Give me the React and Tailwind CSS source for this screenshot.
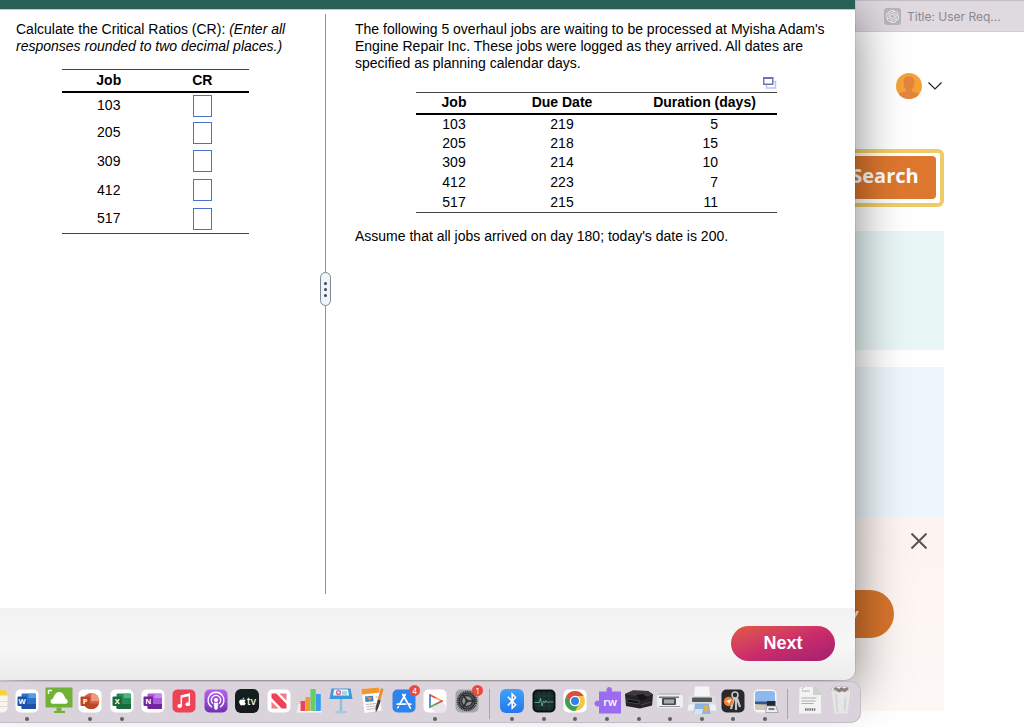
import React from "react";
import { SiOpenai } from "react-icons/si";
import { FaApple, FaBluetoothB } from "react-icons/fa";

const criticalJobs = ["103", "205", "309", "412", "517"];

const jobs = [
  ["103", "219", "5"],
  ["205", "218", "15"],
  ["309", "214", "10"],
  ["412", "223", "7"],
  ["517", "215", "11"],
];

function Svg({ children, box = "0 0 24 24" }) {
  return (
    <svg viewBox={box} className="size-6 overflow-visible" aria-hidden="true">
      {children}
    </svg>
  );
}

function Tile({ fill = "#fff", children }) {
  return (
    <Svg>
      <rect x="0.5" y="0.5" width="23" height="23" rx="5" fill={fill} />
      {children}
    </Svg>
  );
}

function OfficeIcon({ letter, dark, mid, light, round }) {
  return (
    <Tile>
      {round ? (
        <>
          <circle cx="13.3" cy="12" r="8" fill={mid} />
          <path d="M13.3 4a8 8 0 0 1 8 8h-8z" fill={light} />
          <path d="M5.6 14.5h15.3A8 8 0 0 1 5.6 14.5z" fill={dark} />
        </>
      ) : (
        <>
          <rect x="6.5" y="4.5" width="14.5" height="15.5" rx="1.2" fill={mid} />
          <path d="M13.5 4.500h6.300q1.200 0 1.200 1.200v3.300h-7.500z" fill={light} />
          <path d="M6.500 15h14.500v3.800q0 1.200-1.200 1.200H7.700q-1.200 0-1.200-1.200z" fill={dark} />
        </>
      )}
      <rect x="2.500" y="7.500" width="9.500" height="9.500" rx="1" fill={dark} />
      <text x="7.200" y="15" fontSize="7.500" fontWeight="700" fill="#fff" textAnchor="middle" fontFamily="Open Sans, sans-serif">
        {letter}
      </text>
    </Tile>
  );
}

function Badge({ n }) {
  return (
    <span className="absolute -top-1 -right-1 flex size-[11px] items-center justify-center rounded-full bg-[#e9493f] font-['Inter',sans-serif] text-[8px] leading-none text-white">
      {n}
    </span>
  );
}

const NotesIcon = () => (
  <Tile fill="#f7f5ec">
    <path d="M.5 6.500v-1a5 5 0 0 1 5-5h13a5 5 0 0 1 5 5v1z" fill="#f8cf3e" />
    <path d="M1 12.500h22M1 17.500h22" stroke="#d5d2c9" strokeWidth=".7" />
  </Tile>
);

const CloudScreenIcon = () => (
  <Svg>
    <rect x="-1.500" y="-1.500" width="27" height="20" rx="1" fill="#6fb236" />
    <path d="M9.500 18.500h5V22h3.500v2H7v-2h2.500z" fill="#6fb236" />
    <path d="M1.500 5V1.500H5" fill="none" stroke="#fff" strokeWidth="1.400" />
    <path d="M5.500 14.800c-2.500-.5-2.500-4.300 0-4.800C7 8 8 3 12.300 3c4.200 0 5.200 5 6.700 7 2.300.6 2.300 4.300 0 4.800z" fill="#fff" />
  </Svg>
);

const MusicIcon = () => (
  <Tile fill="#ee4256">
    <path d="M9.300 16.500V7l8-1.800v9.500" fill="none" stroke="#fff" strokeWidth="1.500" />
    <path d="M9 6.500l8.800-2v2.500L9 9z" fill="#fff" />
    <ellipse cx="7.700" cy="17" rx="2.300" ry="1.900" fill="#fff" />
    <ellipse cx="15.800" cy="15.200" rx="2.300" ry="1.900" fill="#fff" />
  </Tile>
);

const PodcastsIcon = () => (
  <Tile fill="url(#podcast)">
    <defs>
      <linearGradient id="podcast" x1="0" y1="0" x2="0" y2="1">
        <stop offset="0" stopColor="#b964ef" />
        <stop offset="1" stopColor="#6f31b0" />
      </linearGradient>
    </defs>
    <g fill="none" stroke="#fff" strokeWidth="1.300">
      <path d="M8 18.200a8 8 0 1 1 8 0" />
      <path d="M8.700 14.500a4.700 4.700 0 1 1 6.600 0" />
    </g>
    <circle cx="12" cy="11" r="2" fill="#fff" />
    <path d="M10 14h4l-.8 6.200h-2.400z" fill="#fff" stroke="#fff" strokeLinejoin="round" strokeWidth=".6" />
  </Tile>
);

const TvIcon = () => (
  <span className="flex size-6 items-center justify-center rounded-md bg-linear-to-b from-[#10211f] to-[#16181a] text-white">
    <FaApple className="size-[9px]" />
    <span className="font-['Inter',sans-serif] text-[10px] leading-none font-medium">tv</span>
  </span>
);

const NewsIcon = () => (
  <Tile>
    <path d="M4.500 4.500h4.800L19.500 15v4.500h-4.800L4.500 9z" fill="#ee4256" />
    <path d="M12.500 4.500h7V11.500zM4.500 12.500v7h7z" fill="#f17a86" />
  </Tile>
);

const NumbersIcon = () => (
  <Svg>
    <path d="M-1 23.500l1.500-9h21l2 9z" fill="#fbfafc" />
    <rect x="2.500" y="12" width="4.800" height="10" fill="#e6455b" />
    <rect x="7.500" y="8" width="4.800" height="14" fill="#f29a35" />
    <rect x="12.500" y="0" width="5.200" height="22" fill="#65cf66" />
    <rect x="18" y="5" width="4.800" height="17" fill="#3c9bf0" />
    <path d="M1 14v7" stroke="#aaa" strokeDasharray="1 1" strokeWidth=".6" />
  </Svg>
);

const KeynoteIcon = () => (
  <Svg>
    <path d="M2.500-.5h19l2 10.500H.5z" fill="#3c9adc" />
    <path d="M5 .5h14l1 6H4z" fill="#eef5fb" />
    <circle cx="9.500" cy="3.600" r="1.900" fill="none" stroke="#d85ca0" strokeWidth="1.300" />
    <path d="M13 3h5M13 5h5" stroke="#58b9c8" strokeWidth="1" />
    <path d="M10.800 10h2.400v12h-2.400z" fill="#8fbedb" />
    <ellipse cx="12" cy="23" rx="6.500" ry="1.500" fill="#a9c8da" />
  </Svg>
);

const PagesIcon = () => (
  <Svg>
    <path d="M.5 0l17.500-1.500 2.500 23L3.500 24z" fill="#fcfbf9" />
    <path d="M.5 0L18-1.500l.6 5L1 5.500z" fill="#f4952e" />
    <path d="M4 7.500l8-.8.500 5.500-8 .8z" fill="#3685c9" />
    <path d="M5.500 8.500l5.500-.5-2 4z" fill="#f28b36" />
    <path d="M14.500 8h3M5 15.500l10-1M5.500 18l9-1M6 20.500l8-1" stroke="#a8a8aa" strokeWidth=".8" />
    <path d="M20-1l2.500 1-5.500 19-2 4-.5-4.500z" fill="#e58b31" />
    <path d="M17 10.500l2.800 1-3 8.500-2 3.500-.2-4.500z" fill="#3e4044" />
  </Svg>
);

const AppStoreIcon = () => (
  <Tile fill="#2f83ec">
    <g stroke="#fff" strokeWidth="1.700" strokeLinecap="round" fill="none">
      <path d="M13.300 5.500L7.500 15.500M10.800 5.500l6.200 11M5.200 15.200h8.300M16.300 15.200h2.500M6.300 17.800l-.5.900M17.800 18l.6 1" />
    </g>
  </Tile>
);

const PlayIcon = () => (
  <Tile>
    <path d="M18 12l5.500 5v1.500a5 5 0 0 1-5 5H12L7 18z" fill="#e9e6ea" />
    <g fill="none" strokeWidth="1.800" strokeLinecap="round">
      <path d="M7 6v12" stroke="#3f88dc" />
      <path d="M7 6l6 3" stroke="#e04f43" />
      <path d="M13 9l6 3" stroke="#efb13c" />
      <path d="M19 12l-6 3" stroke="#c65171" />
      <path d="M13 15l-6 3" stroke="#59a85e" />
    </g>
  </Tile>
);

const SettingsIcon = () => (
  <Tile fill="#a4a6a8">
    <circle cx="12" cy="12" r="9.300" fill="none" stroke="#35373a" strokeWidth="2" strokeDasharray="1.200 .6" />
    <circle cx="12" cy="12" r="8" fill="#55585b" stroke="#242629" strokeWidth="1.200" />
    <circle cx="12" cy="12" r="5.500" fill="#8c8f91" stroke="#2b2d30" strokeWidth="1.300" />
    <circle cx="12" cy="12" r="1.800" fill="#3e4143" />
    <path d="M12 12h7.500M12 12L8 5.500M12 12l-4 6.500" stroke="#292b2e" strokeWidth="1.500" />
  </Tile>
);

const BluetoothIcon = () => (
  <span className="flex size-6 items-center justify-center rounded-md bg-linear-to-b from-[#43a0f6] to-[#2477ed] text-white">
    <FaBluetoothB className="size-[18px]" />
  </span>
);

const MonitorIcon = () => (
  <Tile fill="#101a1b">
    <rect x="2" y="2" width="20" height="20" rx="3" fill="#172d2b" stroke="#050808" />
    <path d="M2 7h20M2 12h20M2 17h20M7 2v20M12 2v20M17 2v20" stroke="#28463f" strokeWidth=".6" />
    <path d="M2.500 13.500h5L8.500 9l1.500 8 1.500-5 1.500 2 1-2.500 1.500 2 1-.5h5" fill="none" stroke="#74b9a6" strokeWidth=".8" />
  </Tile>
);

const ChromeIcon = () => (
  <Tile>
    <circle cx="12" cy="12" r="10" fill="#f4c63d" />
    <path d="M3.340 7A10 10 0 0 1 20.660 7H12a5 5 0 0 0-4.330 7.500z" fill="#dc4c3f" />
    <path d="M3.340 7A10 10 0 0 0 12 22l4.330-7.500a5 5 0 0 1-8.660 0z" fill="#3e9e58" />
    <circle cx="12" cy="12" r="5.200" fill="#fff" />
    <circle cx="12" cy="12" r="4" fill="#397fe7" />
  </Tile>
);

const PuzzleIcon = () => (
  <Svg>
    <path d="M4 2.500h8a2.800 2.800 0 1 1 4.500 0H26v22H4V17a2.900 2.900 0 1 1 0-4.800z" fill="#9c6cf0" />
    <text x="15" y="17" fontSize="11" fontWeight="600" fill="#fff" textAnchor="middle" fontFamily="Open Sans, sans-serif">
      rw
    </text>
  </Svg>
);

const BlackPrinterIcon = () => (
  <Svg>
    <path d="M-2 5l8-3.500L21 2l5 3.500-1 11-12 3-14-2.500z" fill="#232326" />
    <path d="M-2 5l8-3.500L21 2l5 3.500-10 3z" fill="#3b3b3f" />
    <path d="M9 6l7-1 5 4-7 3z" fill="#151517" />
    <path d="M0 10l12 2v3L0 13zM14 16l10-3" fill="#0d0d0f" stroke="#56565a" strokeWidth=".7" />
  </Svg>
);

const WhitePrinterIcon = () => (
  <Svg>
    <path d="M1 3.500h21l3 4v10l-2 1.500H1l-2-1.500v-10z" fill="#efefef" />
    <path d="M1 3.500h21l1 2.500H0z" fill="#c4c4c6" />
    <path d="M1 7.500h20v1.500H1z" fill="#77787b" />
    <rect x="4" y="9" width="14" height="7" rx="1" fill="#4a4b4f" />
    <rect x="6" y="10.500" width="10" height="4" fill="#a7abad" />
    <path d="M1 17.500h21" stroke="#97989b" />
  </Svg>
);

const PrintCenterIcon = () => (
  <Svg>
    <path d="M5-2.500h14l1 11H4z" fill="#f5f5f6" />
    <rect x="-1.500" y="7" width="27" height="13" rx="2" fill="#dcdddf" />
    <rect x="2" y="8.500" width="20" height="4.500" rx="1" fill="#55565a" />
    <path d="M-1.500 15.500h27l1 6h-29z" fill="#f1f1f2" />
    <path d="M5 14.500h14l1.500 10.500H3.500z" fill="#8cb5df" />
    <path d="M14 16l4 1.500.5 5-4 .5z" fill="#efb039" />
    <path d="M5 20h8l-1 5H3.500z" fill="#d5e4f2" />
  </Svg>
);

const KeychainIcon = () => (
  <Tile fill="#29292c">
    <g fill="none" stroke="#c5c8c9" strokeWidth="1.600">
      <circle cx="14" cy="6" r="3" />
      <path d="M13 9l-3 11M15 9v12M16 9l3 9" strokeWidth="2.200" />
    </g>
    <circle cx="7.500" cy="12.500" r="4.700" fill="#f08130" />
    <path d="M4.500 12.500l6-2.500-2.500 5-.8-2z" fill="#fff" />
  </Tile>
);

const PreviewIcon = () => (
  <Tile fill="#f5f6f8">
    <rect x="2" y="2" width="20" height="19" rx="3" fill="#8db8ed" />
    <path d="M2 12.500h20V16H2z" fill="#315988" />
    <path d="M2 15l20 1v3q0 2-2 2H5q-3 0-3-3z" fill="#d3c7b5" />
    <path d="M14 12h8.500v5H14z" fill="#26282b" />
    <path d="M13.500 17H23l2 6.500H12.500z" fill="#eceef0" stroke="#8b8d91" strokeWidth=".7" />
    <path d="M15.500 20h6" stroke="#55585c" strokeWidth="1.500" />
  </Tile>
);

const DocumentsIcon = () => (
  <Svg>
    <path d="M3-2h14l6 5v21.500H1L1.500-1z" fill="#f3f3f3" />
    <path d="M15-2h3l5 5v3h-8z" fill="#d0d0d1" />
    <path d="M4 0l2-2M4 2h8M3.500 9h15M3.500 12h14M3.500 14.500h12" stroke="#9d9d9f" strokeWidth=".8" />
    <path d="M7 20.500h11" stroke="#757578" strokeWidth="2.500" strokeDasharray="1.500 .7" />
  </Svg>
);

const TrashIcon = () => (
  <Svg>
    <path d="M2.500 0h19l-3 24.500h-13z" fill="#e6e6e7" />
    <path d="M7 5l1.500 18M16.500 8l-1 14" stroke="#d6d6d8" strokeWidth="2" />
    <ellipse cx="12" cy="0" rx="9.800" ry="2.600" fill="#f4f4f4" stroke="#b1b1b3" strokeWidth=".6" />
    <path d="M4 0l3-2 3 2 3-2 2 2 3-2 2 2-4 3-3-1-3 1.500L8 2z" fill="#86827c" />
    <path d="M8-.5l2 1M14 .5l2-1" stroke="#cf7652" strokeWidth="1.300" />
    <path d="M11-1l2 1.500" stroke="#4b89b8" strokeWidth="1.300" />
  </Svg>
);

const mainApps = [
  { name: "Notes", icon: <NotesIcon /> },
  { name: "Word", running: true, icon: <OfficeIcon letter="W" dark="#1c51a5" mid="#2f70cc" light="#4fa3e8" /> },
  { name: "Cloud Screen", icon: <CloudScreenIcon /> },
  { name: "PowerPoint", running: true, icon: <OfficeIcon letter="P" dark="#bd4527" mid="#d96544" light="#ef9a7c" round /> },
  { name: "Excel", running: true, icon: <OfficeIcon letter="X" dark="#1a6a3f" mid="#2a8a57" light="#4cb67c" /> },
  { name: "OneNote", icon: <OfficeIcon letter="N" dark="#7225a0" mid="#a95bdc" light="#c88bef" /> },
  { name: "Music", icon: <MusicIcon /> },
  { name: "Podcasts", icon: <PodcastsIcon /> },
  { name: "TV", icon: <TvIcon /> },
  { name: "News", icon: <NewsIcon /> },
  { name: "Numbers", icon: <NumbersIcon /> },
  { name: "Keynote", icon: <KeynoteIcon /> },
  { name: "Pages", icon: <PagesIcon /> },
  { name: "App Store", badge: 4, icon: <AppStoreIcon /> },
  { name: "Play", running: true, icon: <PlayIcon /> },
  { name: "Settings", badge: 1, icon: <SettingsIcon /> },
];

const recentApps = [
  { name: "Bluetooth", running: true, icon: <BluetoothIcon /> },
  { name: "Activity Monitor", running: true, icon: <MonitorIcon /> },
  { name: "Chrome", running: true, icon: <ChromeIcon /> },
  { name: "Read and Write", running: true, icon: <PuzzleIcon /> },
  { name: "Black printer", running: true, icon: <BlackPrinterIcon /> },
  { name: "White printer", running: true, icon: <WhitePrinterIcon /> },
  { name: "Print Center", running: true, icon: <PrintCenterIcon /> },
  { name: "Keychain", running: true, icon: <KeychainIcon /> },
  { name: "Preview", running: true, icon: <PreviewIcon /> },
];

const dockFiles = [
  { name: "Documents", icon: <DocumentsIcon /> },
  { name: "Trash", icon: <TrashIcon /> },
];

function DockGroup({ items, className }) {
  return (
    <div className={`flex shrink-0 justify-between ${className}`}>
      {items.map((item) => (
        <button key={item.name} type="button" aria-label={item.name} className="relative size-6">
          {item.icon}
          {item.badge && <Badge n={item.badge} />}
          {item.running && (
            <span className="absolute top-7 left-[10px] size-[4px] rounded-full bg-[#625e64]" />
          )}
        </button>
      ))}
    </div>
  );
}

function Dock() {
  return (
    <nav
      aria-label="Dock"
      className="absolute bottom-1 left-0 z-20 flex h-[42px] w-[861px] justify-end rounded-r-[10px] border border-l-0 border-[#c3bec5] bg-[#dad3dc] pt-[7px] pr-[7px]"
    >
      <DockGroup items={mainApps} className="w-[495px]" />
      <span className="mx-[10px] h-[30px] w-px shrink-0 bg-[#aaa4ad]" />
      <DockGroup items={recentApps} className="w-[277px]" />
      <span className="mx-[10px] h-[30px] w-px shrink-0 bg-[#aaa4ad]" />
      <DockGroup items={dockFiles} className="w-[55px]" />
    </nav>
  );
}

function AnswerPane() {
  return (
    <section className="w-80 shrink-0 pt-[11px] pr-4 pl-4">
      <p>
        Calculate the Critical Ratios (CR): <i>(Enter all responses rounded to two decimal places.)</i>
      </p>
      <table className="mt-[14px] ml-[46px] w-[187px] table-fixed border-collapse border-y border-[#444] text-center">
        <thead>
          <tr className="h-[22px] border-b-2 border-black">
            <th>Job</th>
            <th>CR</th>
          </tr>
        </thead>
        <tbody>
          {criticalJobs.map((job) => (
            <tr key={job} className="h-[29px] first:h-[27px] nth-2:h-7">
              <td>{job}</td>
              <td>
                <input
                  aria-label={`Critical ratio for job ${job}`}
                  className="mx-auto block h-[22px] w-[19px] border border-[#4a72c8] bg-white text-center outline-none"
                />
              </td>
            </tr>
          ))}
        </tbody>
      </table>
    </section>
  );
}

function Divider() {
  return (
    <div className="mt-1 mb-[14px] flex w-[11px] shrink-0 flex-col items-center">
      <span className="h-[258px] w-px bg-[#8a93a0]" />
      <button
        type="button"
        aria-label="Resize panes"
        className="flex h-[34px] w-[11px] shrink-0 flex-col items-center justify-center gap-[3px] rounded-full border border-[#7b8794] bg-[#f0f3f7]"
      >
        <span className="size-[3px] shrink-0 rounded-full bg-[#3f4650]" />
        <span className="size-[3px] shrink-0 rounded-full bg-[#3f4650]" />
        <span className="size-[3px] shrink-0 rounded-full bg-[#3f4650]" />
      </button>
      <span className="w-px flex-1 bg-[#8a93a0]" />
    </div>
  );
}

function ProblemPane() {
  return (
    <section className="min-w-0 flex-1 pt-[11px] pr-5 pl-6">
      <p>
        The following 5 overhaul jobs are waiting to be processed at Myisha Adam's Engine Repair Inc. These jobs
        were logged as they arrived. All dates are specified as planning calendar days.
      </p>
      <div className="ml-[61px] w-[361px]">
        <button type="button" aria-label="Open table in a new window" className="mt-1 mb-px ml-auto block size-[15px]">
          <svg viewBox="0 0 15 15" className="size-[15px]" fill="none">
            <path d="M4.500 5.500h9v6.500h-9z" fill="#fff" stroke="#c0c4e6" strokeWidth="1.500" />
            <path d="M1.700 1.700h9v6.600h-9z" fill="#fff" stroke="#6b75b8" strokeWidth="1.400" />
            <path d="M1 2h10.400" stroke="#6b75b8" strokeWidth="2" />
          </svg>
        </button>
        <table className="w-full table-fixed border-collapse border-y border-[#444] text-center">
          <colgroup>
            <col className="w-[76px]" />
            <col className="w-[140px]" />
            <col className="w-[145px]" />
          </colgroup>
          <thead>
            <tr className="h-[21px] border-b-2 border-black">
              <th>Job</th>
              <th>Due Date</th>
              <th>Duration (days)</th>
            </tr>
          </thead>
          <tbody>
            {jobs.map(([job, due, duration]) => (
              <tr key={job} className="h-5 nth-2:h-[19px]">
                <td>{job}</td>
                <td>{due}</td>
                <td className="pr-[59px] text-right">{duration}</td>
              </tr>
            ))}
          </tbody>
        </table>
      </div>
      <p className="mt-[15px]">Assume that all jobs arrived on day 180; today's date is 200.</p>
    </section>
  );
}

function QuizWindow() {
  return (
    <main className="z-10 mb-[47px] flex min-w-0 flex-1 flex-col overflow-hidden rounded-br-[10px] bg-white shadow-[0_14px_50px_rgba(0,0,0,0.5),0_0_1px_rgba(0,0,0,0.7)]">
      <div className="h-[10px] shrink-0 border-b border-[#b8cdca] bg-[#285f57]" />
      <div className="flex flex-1 text-[14px] leading-[17px] text-black">
        <AnswerPane />
        <Divider />
        <ProblemPane />
      </div>
      <footer className="flex h-[72px] shrink-0 items-center justify-end bg-linear-to-b from-[#f1f1f1] via-[#f7f7f7] to-[#ececec] pr-5 pb-[2px]">
        <button
          type="button"
          className="h-[35px] w-[104px] rounded-full bg-linear-to-br from-[#e2593f] via-[#cc2d6a] to-[#a01f70] text-lg font-bold text-white"
        >
          Next
        </button>
      </footer>
    </main>
  );
}

function BrowserPage() {
  return (
    <aside className="flex w-[169px] shrink-0 flex-col bg-white">
      <div className="flex h-8 shrink-0 items-center gap-[6px] border-t border-b border-t-[#c4bec6] border-b-[#d2ccd4] bg-[#dfd9e0] pt-px pl-[29px] font-['Inter',sans-serif] text-xs text-[#8d878e]">
        <span className="flex size-[17px] items-center justify-center rounded-[3px] bg-[#b9b5ba] text-[#f3f0f4]">
          <SiOpenai className="size-[13px]" />
        </span>
        <span>Title: User Req...</span>
      </div>
      <button type="button" aria-label="Account" className="mt-[41px] ml-[41px] flex items-center gap-[6px]">
        <svg viewBox="0 0 26 26" className="size-[26px]">
          <clipPath id="avatar">
            <circle cx="13" cy="13" r="13" />
          </clipPath>
          <g clipPath="url(#avatar)">
            <path d="M0 0h26v26H0z" fill="#f4a237" />
            <path
              d="M13 3.500c3.800 0 5.600 2.300 5.400 5.700-.1 2.900-.9 5.400-2.200 7v2.300c3 .9 6.700 1.400 8.300 3.900L26 27H0l1.500-4.600c1.600-2.500 5.300-3 8.300-3.900v-2.300c-1.300-1.600-2.100-4.100-2.200-7C7.400 5.800 9.200 3.500 13 3.500z"
              fill="#e3853f"
            />
          </g>
        </svg>
        <svg viewBox="0 0 14 8" className="h-2 w-[14px]" fill="none" stroke="#222" strokeWidth="1.200">
          <path d="M.5.5L7 7l6.500-6.500" />
        </svg>
      </button>
      <div className="mt-[50px] -ml-[31px] h-[58px] w-[120px] shrink-0 rounded-md border-4 border-[#f0cc68] px-1 py-[3px]">
        <button
          type="button"
          className="h-[43px] w-full rounded bg-[#de782e] pb-1 pl-[2px] font-['Open_Sans',sans-serif] text-xl font-bold text-white"
        >
          Search
        </button>
      </div>
      <div className="mt-6 mr-20 h-[119px] shrink-0 bg-[#e8f6f5]" />
      <div className="mt-[17px] mr-20 h-[150px] shrink-0 bg-[#edf7fb]" />
      <div className="mr-20 mb-4 flex-1 bg-linear-to-b from-[#fef4f1] to-[#fcf8f5]">
        <button type="button" aria-label="Close" className="mt-4 ml-14 block size-4">
          <svg viewBox="0 0 16 16" className="size-4" stroke="#555" strokeWidth="2">
            <path d="M.5.5l15 15M15.500.5l-15 15" />
          </svg>
        </button>
        <button
          type="button"
          className="mt-[41px] -ml-[61px] block h-12 w-[100px] rounded-full bg-[#d9752d] pr-9 text-right font-['Open_Sans',sans-serif] text-base font-bold text-white italic"
        >
          Try
        </button>
      </div>
    </aside>
  );
}

export default function App() {
  return (
    <div className="relative flex min-h-screen w-full overflow-hidden bg-white font-['Liberation_Sans',Arial,sans-serif]">
      <QuizWindow />
      <BrowserPage />
      <Dock />
    </div>
  );
}
